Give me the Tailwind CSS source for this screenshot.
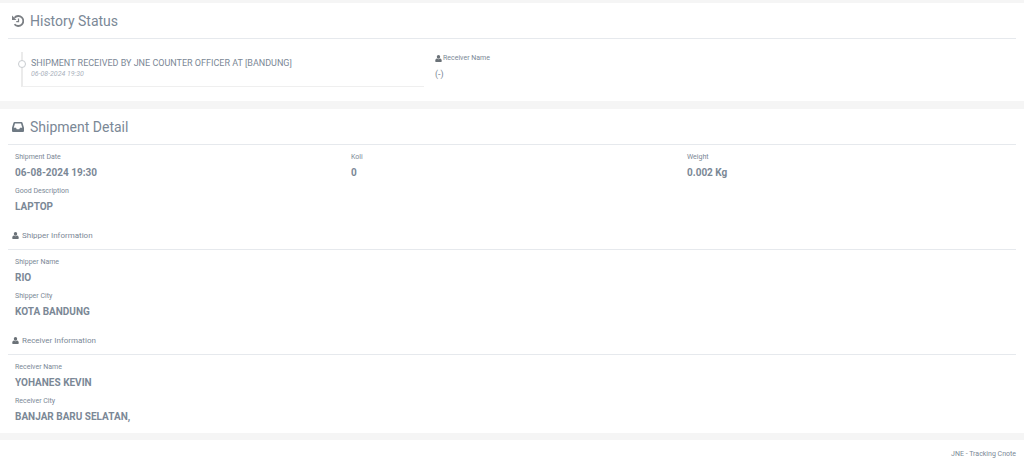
<!DOCTYPE html>
<html lang="en">
<head>
    <meta charset="UTF-8">
    <meta name="viewport" content="width=device-width, initial-scale=1.0">
    <title>JNE - Tracking Cnote</title>
    <script src="https://cdn.jsdelivr.net/npm/@tailwindcss/browser@4"></script>
</head>
<body class="min-h-screen flex flex-col bg-[#f5f5f5] pt-[3px] font-[Roboto,sans-serif] text-[#7b8896]">
    <svg class="hidden">
        <symbol id="user" viewBox="0 0 14 14">
            <path d="M7 0c2 0 3.300 1.500 3.300 3.500S9 7.500 7 7.500 3.700 5.500 3.700 3.500 5 0 7 0zM4 7c1.800 1.700 4.200 1.700 6 0 2.400.3 3.500 2.200 3.500 5 0 1.200-.8 2-2 2h-9c-1.200 0-2-.8-2-2 0-2.800 1.100-4.700 3.500-5z"/>
        </symbol>
    </svg>

    <main class="flex flex-col gap-2">
        <!-- History -->
        <section class="bg-white px-2 pb-[14px]">
            <h2 class="flex items-center gap-1.5 h-9 px-1 border-b border-[#e6e9ed] text-sm">
                <svg class="w-3 h-3" viewBox="0 0 24 24" fill="none" stroke="#7b7f84" stroke-width="3.600">
                    <path d="M5 5.500A10 10 0 1 1 5 18.500"/>
                    <path d="M13 7v6H8.500" stroke-width="2.500"/>
                    <path d="M0 1v9h9z" fill="#7b7f84" stroke="none"/>
                </svg>
                History Status
            </h2>
            <div class="grid grid-cols-12 pt-[13px]">
                <ul class="col-span-5 pl-[13px] pr-1">
                    <li class="relative h-[35px] pl-2 pt-1 border-l-2 border-b border-b-[#efefef] border-l-[#ebebeb]">
                        <span class="absolute -left-[5px] top-2 w-2 h-2 rounded-full border border-[#c8ccd0] bg-white"></span>
                        <h3 class="text-[9px] leading-[14px]">SHIPMENT RECEIVED BY JNE COUNTER OFFICER AT [BANDUNG]</h3>
                        <p class="text-[7px] leading-2 italic text-[#aab2bd]">06-08-2024 19:30</p>
                    </li>
                </ul>
                <dl class="col-span-7 pl-[7px]">
                    <dt class="flex items-center gap-px text-[7px] leading-3">
                        <svg class="w-[7px] h-[7px]" fill="#6b7278"><use href="#user"/></svg>
                        Receiver Name
                    </dt>
                    <dd class="pt-1 text-[9px] leading-3">(-)</dd>
                </dl>
            </div>
        </section>

        <!-- Shipment -->
        <section class="bg-white px-2 pb-2">
            <h2 class="flex items-center gap-1.5 h-9 px-1 border-b border-[#e6e9ed] text-sm">
                <svg class="w-3 h-3" viewBox="0 0 24 24" fill="#6f7a84">
                    <path fill-rule="evenodd" d="M5 2h14q1.500 0 2 1.500l3 10V20q0 2-2 2H2q-2 0-2-2v-6.500l3-10Q3.500 2 5 2zM6 5 3.500 13.500H8l1.500 3h5l1.500-3h4.500L18 5z"/>
                </svg>
                Shipment Detail
            </h2>
            <dl class="grid grid-cols-3 gap-y-[2px] pt-1 [&>div]:px-[7px]">
                <div>
                    <dt class="text-[7px] leading-4">Shipment Date</dt>
                    <dd class="text-[10px] leading-4 font-bold">06-08-2024 19:30</dd>
                </div>
                <div>
                    <dt class="text-[7px] leading-4">Koli</dt>
                    <dd class="text-[10px] leading-4 font-bold">0</dd>
                </div>
                <div>
                    <dt class="text-[7px] leading-4">Weight</dt>
                    <dd class="text-[10px] leading-4 font-bold">0.002 Kg</dd>
                </div>
                <div>
                    <dt class="text-[7px] leading-4">Good Description</dt>
                    <dd class="text-[10px] leading-4 font-bold">LAPTOP</dd>
                </div>
            </dl>

            <h3 class="flex items-center gap-[3px] h-7 mt-[7px] px-1 border-b border-[#e6e9ed] text-[8px]">
                <svg class="w-[7px] h-[7px]" fill="#6b7278"><use href="#user"/></svg>
                Shipper Information
            </h3>
            <dl class="grid gap-y-[2px] pt-1 [&>div]:px-[7px]">
                <div>
                    <dt class="text-[7px] leading-4">Shipper Name</dt>
                    <dd class="text-[10px] leading-4 font-bold">RIO</dd>
                </div>
                <div>
                    <dt class="text-[7px] leading-4">Shipper City</dt>
                    <dd class="text-[10px] leading-4 font-bold">KOTA BANDUNG</dd>
                </div>
            </dl>

            <h3 class="flex items-center gap-[3px] h-7 mt-[7px] px-1 border-b border-[#e6e9ed] text-[8px]">
                <svg class="w-[7px] h-[7px]" fill="#6b7278"><use href="#user"/></svg>
                Receiver Information
            </h3>
            <dl class="grid gap-y-[2px] pt-1 [&>div]:px-[7px]">
                <div>
                    <dt class="text-[7px] leading-4">Receiver Name</dt>
                    <dd class="text-[10px] leading-4 font-bold">YOHANES KEVIN</dd>
                </div>
                <div>
                    <dt class="text-[7px] leading-4">Receiver City</dt>
                    <dd class="text-[10px] leading-4 font-bold">BANJAR BARU SELATAN,</dd>
                </div>
            </dl>
        </section>
    </main>

    <footer class="grow mt-[7px] px-2 pt-2 bg-white text-right text-[7px] leading-3">
        JNE - Tracking Cnote
    </footer>
</body>
</html>
